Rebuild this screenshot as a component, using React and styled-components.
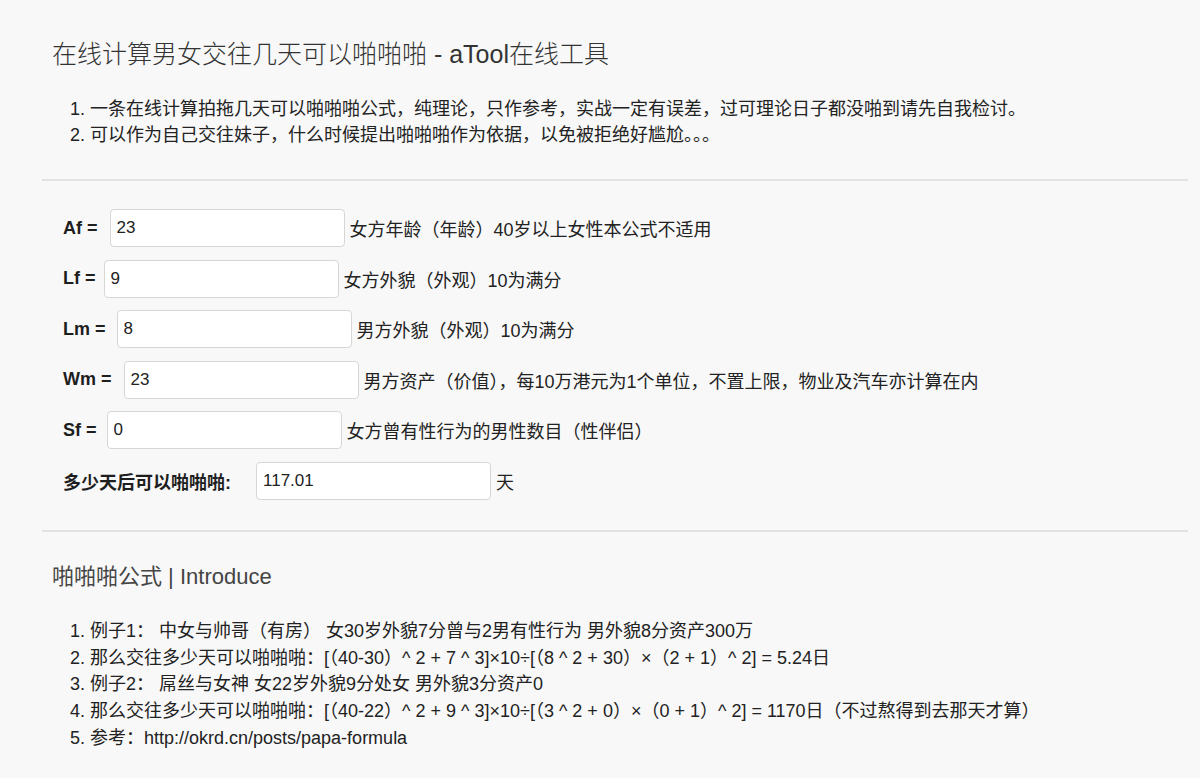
import styled, { createGlobalStyle } from "styled-components";

const GlobalStyle = createGlobalStyle`
  html, body {
    margin: 0;
    padding: 0;
    background: #f8f8f8;
  }
  body {
    font-family: "Liberation Sans", "Noto Sans CJK SC", sans-serif;
    color: #222;
  }
`;

const Page = styled.div`
  padding: 39px 12px 20px 42px;
`;

const Title = styled.h1`
  margin: 0 0 0 10px;
  font-size: 25px;
  line-height: 30px;
  font-weight: 300;
  color: #333;
`;

const SubTitle = styled.h2`
  margin: 31px 0 0 10px;
  font-size: 22px;
  line-height: 28px;
  font-weight: normal;
  color: #444;
`;

const List = styled.ol`
  margin: ${(p) => p.$top}px 0 0;
  padding-left: 48px;
  list-style: none;
  counter-reset: item;
  font-size: 18px;
  line-height: ${(p) => p.$lh}px;
  color: #222;
`;

const Item = styled.li`
  counter-increment: item;

  &::before {
    content: counter(item) ".";
    display: inline-block;
    width: 20px;
    margin-left: -20px;
  }
`;

const Rule = styled.hr`
  margin: ${(p) => p.$top}px 0 0;
  border: none;
  border-top: 2px solid #e3e3e3;
  height: 0;
`;

const Form = styled.div`
  margin-top: 28px;
  padding-left: 21px;
  display: flex;
  flex-direction: column;
  gap: 12.6px;
`;

const Row = styled.div`
  display: flex;
  align-items: center;
  height: 38px;
  font-size: 18px;
  color: #222;
`;

const Label = styled.label`
  font-weight: bold;
  color: #1e1e1e;
  margin-right: ${(p) => p.$gap}px;
  white-space: nowrap;
`;

const Input = styled.input`
  box-sizing: border-box;
  width: 235px;
  height: 38px;
  padding: 0 6px;
  border: 1px solid #d6d6d6;
  border-radius: 4px;
  background: #fff;
  font-family: "Liberation Sans", "Noto Sans CJK SC", sans-serif;
  font-size: 17px;
  color: #222;
  outline: none;
`;

const Hint = styled.span`
  margin-left: 5px;
  white-space: nowrap;
`;

const rows = [
  { k: "Af =", v: "23", gap: 12, hint: "女方年龄（年龄）40岁以上女性本公式不适用" },
  { k: "Lf =", v: "9", gap: 8, hint: "女方外貌（外观）10为满分" },
  { k: "Lm =", v: "8", gap: 11, hint: "男方外貌（外观）10为满分" },
  { k: "Wm =", v: "23", gap: 12, hint: "男方资产（价值），每10万港元为1个单位，不置上限，物业及汽车亦计算在内" },
  { k: "Sf =", v: "0", gap: 10, hint: "女方曾有性行为的男性数目（性伴侣）" },
];

const notes = [
  "一条在线计算拍拖几天可以啪啪啪公式，纯理论，只作参考，实战一定有误差，过可理论日子都没啪到请先自我检讨。",
  "可以作为自己交往妹子，什么时候提出啪啪啪作为依据，以免被拒绝好尴尬。。。",
];

const examples = [
  "例子1： 中女与帅哥（有房） 女30岁外貌7分曾与2男有性行为 男外貌8分资产300万",
  "那么交往多少天可以啪啪啪：[（40-30）^ 2 + 7 ^ 3]×10÷[（8 ^ 2 + 30）×（2 + 1）^ 2] = 5.24日",
  "例子2： 屌丝与女神 女22岁外貌9分处女 男外貌3分资产0",
  "那么交往多少天可以啪啪啪：[（40-22）^ 2 + 9 ^ 3]×10÷[（3 ^ 2 + 0）×（0 + 1）^ 2] = 1170日（不过熬得到去那天才算）",
  "参考：http://okrd.cn/posts/papa-formula",
];

export default function App() {
  return (
    <Page>
      <GlobalStyle />
      <Title>在线计算男女交往几天可以啪啪啪 - aTool在线工具</Title>
      <List $top={27} $lh={26}>
        {notes.map((n) => (
          <Item key={n}>{n}</Item>
        ))}
      </List>
      <Rule $top={31} />
      <Form>
        {rows.map((r) => (
          <Row key={r.k}>
            <Label $gap={r.gap}>{r.k}</Label>
            <Input defaultValue={r.v} />
            <Hint>{r.hint}</Hint>
          </Row>
        ))}
        <Row>
          <Label $gap={25}>多少天后可以啪啪啪:</Label>
          <Input defaultValue="117.01" />
          <Hint>天</Hint>
        </Row>
      </Form>
      <Rule $top={30} />
      <SubTitle>啪啪啪公式 | Introduce</SubTitle>
      <List $top={27} $lh={26.75}>
        {examples.map((e) => (
          <Item key={e}>{e}</Item>
        ))}
      </List>
    </Page>
  );
}
